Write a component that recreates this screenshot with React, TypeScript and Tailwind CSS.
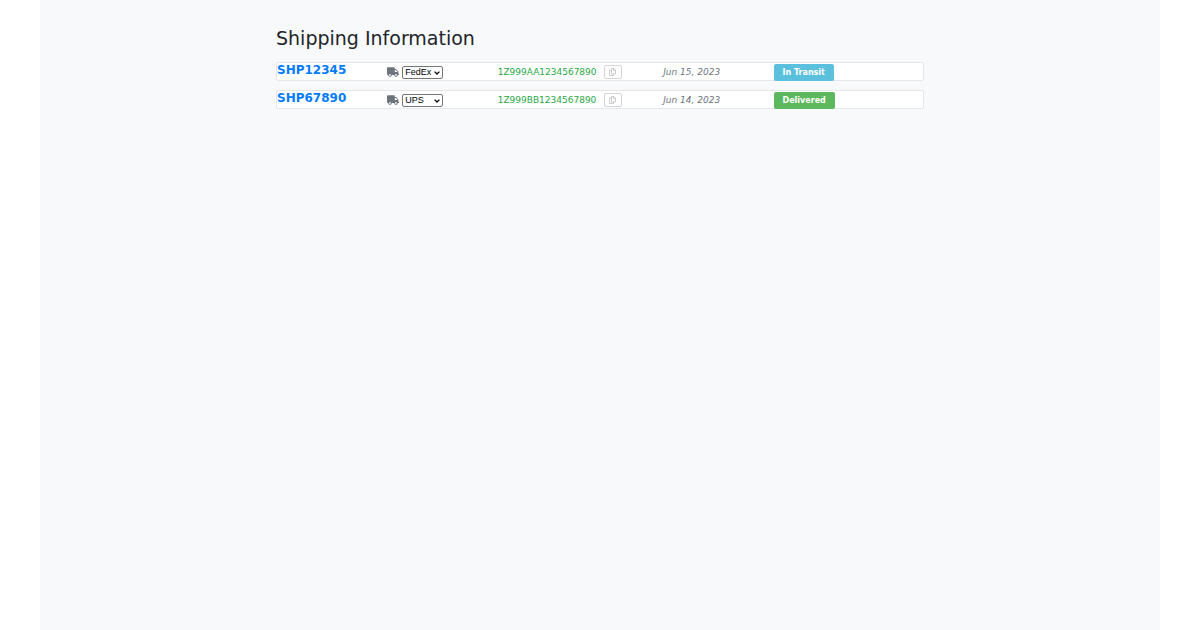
import { FaTruck } from "react-icons/fa";

type Shipment = {
  id: string;
  carrier: string;
  tracking: string;
  date: string;
  status: "In Transit" | "Delivered";
};

const carriers = ["FedEx", "UPS"];

const shipments: Shipment[] = [
  { id: "SHP12345", carrier: "FedEx", tracking: "1Z999AA1234567890", date: "Jun 15, 2023", status: "In Transit" },
  { id: "SHP67890", carrier: "UPS", tracking: "1Z999BB1234567890", date: "Jun 14, 2023", status: "Delivered" },
];

const statusColors = {
  "In Transit": "bg-[#5bc0de]",
  Delivered: "bg-[#5cb85c]",
};

function CopyIcon() {
  return (
    <svg viewBox="0 0 14 16" className="h-2 w-[7px]" fill="none" stroke="currentColor" strokeWidth="1.6" aria-hidden="true">
      <path d="M5 1h5l3 3v8H5z" />
      <path d="M9 1v4h4" />
      <path d="M5 4H1v11h8v-3" />
    </svg>
  );
}

function CarrierSelect({ shipment }: { shipment: Shipment }) {
  return (
    <div className="relative">
      <select
        aria-label={`Carrier for ${shipment.id}`}
        defaultValue={shipment.carrier}
        className="block h-[13px] w-[41px] appearance-none rounded-xs border border-[#767676] bg-white pl-0.5 font-['Liberation_Sans',sans-serif] text-[9px] leading-[11px] text-black"
      >
        {carriers.map((carrier) => (
          <option key={carrier}>{carrier}</option>
        ))}
      </select>
      <svg
        viewBox="0 0 6 4"
        className="pointer-events-none absolute top-[5px] right-[3px] h-1 w-1.5 text-black"
        fill="none"
        stroke="currentColor"
        strokeWidth="1.3"
        aria-hidden="true"
      >
        <path d="M.6.6 3 3 5.400.6" />
      </svg>
    </div>
  );
}

function ShipmentRow({ shipment }: { shipment: Shipment }) {
  return (
    <li className="rounded-xs border border-[#e4e6e8] bg-white">
      <div className="-mr-4 grid h-[17px] grid-cols-12">
        <div className="col-span-2 text-xs leading-[14px] font-bold text-[#007bff]">{shipment.id}</div>

        <div className="col-span-2 flex items-center gap-[3px] text-[#6c757d]">
          <FaTruck className="h-[10px] w-3" aria-hidden="true" />
          <CarrierSelect shipment={shipment} />
        </div>

        <div className="col-span-3 flex items-center gap-[3px] text-[#28a745]">
          <span className="min-w-[103px]">{shipment.tracking}</span>
          <button
            type="button"
            aria-label={`Copy ${shipment.tracking}`}
            className="flex h-[14px] w-[18px] items-center justify-center rounded-xs border border-[#d5d5d5] bg-white text-[#c0c0c0]"
          >
            <CopyIcon />
          </button>
        </div>

        <div className="col-span-2 flex items-center text-[#6c757d] italic">{shipment.date}</div>

        <div className="col-span-3 flex items-start pt-px">
          <span className={`flex h-[17px] items-center rounded-xs px-[9px] text-[8px] font-bold text-white ${statusColors[shipment.status]}`}>
            {shipment.status}
          </span>
        </div>
      </div>
    </li>
  );
}

export default function App() {
  return (
    <div className="bg-white px-10 font-['DejaVu_Sans',sans-serif] text-[9px] leading-[14px] text-[#212529]">
      <main className="min-h-screen bg-[#f8f9fb] px-4 pt-[26px]">
        <div className="mx-auto max-w-[648px]">
          <h1 className="mb-3 text-[19px] leading-6">Shipping Information</h1>
          <ul className="flex flex-col gap-[9px]">
            {shipments.map((shipment) => (
              <ShipmentRow key={shipment.id} shipment={shipment} />
            ))}
          </ul>
        </div>
      </main>
    </div>
  );
}
